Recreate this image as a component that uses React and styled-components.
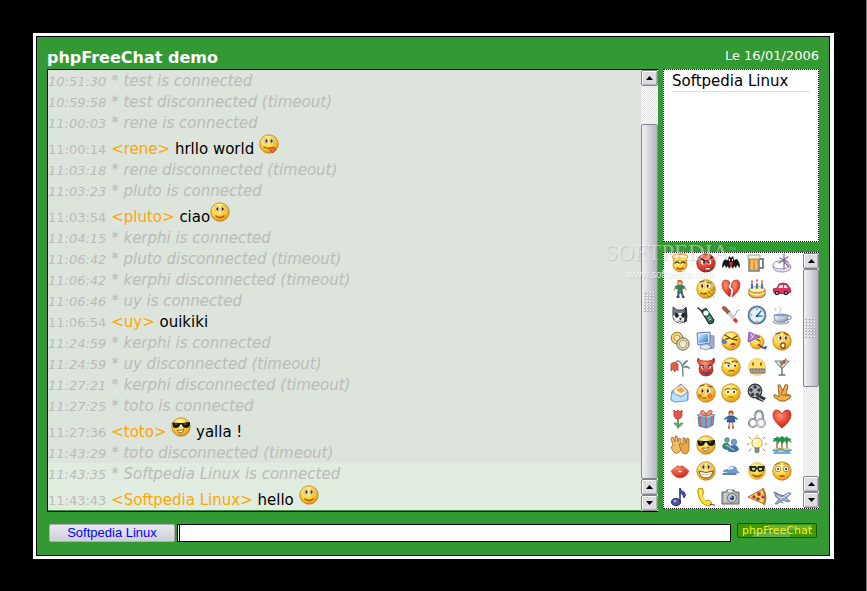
import React, { useState } from "react";
import styled, { createGlobalStyle } from "styled-components";

const GlobalStyle = createGlobalStyle`
  * {
    box-sizing: border-box;
  }

  body {
    margin: 0;
    background-color: #000;
    font-family: "DejaVu Sans", sans-serif;
    font-size: 15px;
  }
`;

const Page = styled.div`
  min-height: 100vh;
  padding: 33px 32px 33px 33px;
  border-right: 1px solid #777;
  border-bottom: 1px solid #777;
`;

const Frame = styled.div`
  position: relative;
  border: solid #fff;
  border-width: 3px 4px 3px 3px;
`;

const ChatWindow = styled.main`
  padding: 0 10px 12px;
  border: 1px solid #000;
  background-color: #339933;
`;

const Header = styled.header`
  display: flex;
  align-items: center;
  justify-content: space-between;
  height: 32px;
  padding-top: 9px;
  color: #fff;
`;

const Title = styled.h1`
  margin: 0;
  font-size: 16px;
  line-height: 20px;
`;

const DateLabel = styled.p`
  margin: 0;
  font-size: 13px;
  line-height: 16px;
  padding-bottom: 4px;
`;

const Columns = styled.div`
  display: flex;
  gap: 5px;
`;

const ChatPanel = styled.section`
  display: flex;
  flex: 1;
  min-width: 0;
  border: solid #000;
  border-width: 1px 0 1px 1px;
`;

const Messages = styled.ul`
  flex: 1;
  margin: 0;
  padding: 0;
  list-style: none;
`;

const Message = styled.li`
  padding-top: 1px;
  line-height: 20px;
  color: ${(props) => (props.$notice ? "#bbb" : "#000")};
  font-style: ${(props) => (props.$notice ? "italic" : "normal")};
  background-color: ${(props) => (props.$recent ? "#e0ecdf" : "#dde4dc")};

  svg {
    width: 20px;
    height: 20px;
    vertical-align: baseline;
  }
`;

const Time = styled.span`
  color: #bbb;
  font-size: 13px;
  line-height: 16px;
`;

const Nick = styled.span`
  color: #ffa500;
`;

const SideColumn = styled.aside`
  display: flex;
  flex-direction: column;
  gap: 10px;
  width: 156px;
`;

const UserList = styled.ul`
  height: 173px;
  margin: 0;
  padding: 0 8px;
  border: 1px dotted #000;
  background-color: #fff;
  list-style: none;
`;

const User = styled.li`
  padding-top: 1px;
  border-bottom: 1px solid #ddd;
  line-height: 20px;
`;

const SmileyPanel = styled.section`
  display: flex;
  height: 257px;
  border: 1px dotted #000;
  border-right: 0;
  background-color: #fff;
`;

const SmileyGrid = styled.div`
  display: grid;
  flex: 1;
  grid-template-columns: repeat(5, 20px);
  grid-auto-rows: 20px;
  row-gap: 6px;
  justify-content: space-between;
  padding: 0 11px 0 6px;
`;

const SmileyButton = styled.button`
  width: 20px;
  height: 20px;
  padding: 0;
  border: 0;
  background: none;
  cursor: pointer;

  svg {
    display: block;
    width: 20px;
    height: 20px;
  }
`;

const Bar = styled.div`
  display: flex;
  flex-direction: column;
  width: ${(props) => props.$width};
  background: repeating-conic-gradient(#e4e4e4 0 25%, #fafafa 0 50%) 0 0 / 2px
    2px;
`;

const ArrowButton = styled.button`
  display: flex;
  align-items: center;
  justify-content: center;
  height: 16px;
  padding: 0;
  border: 1px solid #85858d;
  border-radius: 2px;
  background-color: #dcdce2;
  box-shadow: inset 1px 1px #fff, inset -1px -1px #b4b4bc;
`;

const Thumb = styled.div`
  display: flex;
  align-items: center;
  justify-content: center;
  height: ${(props) => props.$size};
  margin-top: ${(props) => props.$top};
  border: 1px solid #85858d;
  border-radius: 2px;
  background: linear-gradient(90deg, #f0f0f4, #d4d4dc 50%, #b4b4c0);
`;

const Spacer = styled.div`
  flex: 1;
`;

const Form = styled.form`
  display: flex;
  align-items: center;
  margin-top: 11px;
  padding: 0 2px;
`;

const NickButton = styled.button`
  width: 126px;
  height: 18px;
  margin-right: 2px;
  padding: 0;
  border: 1px solid #b0b0b4;
  border-radius: 2px;
  background: linear-gradient(#e8e8ee, #cfcfd8);
  color: #0000ff;
  font-family: "Liberation Sans", sans-serif;
  font-size: 13px;
  line-height: 16px;
`;

const TextInput = styled.input`
  flex: 1;
  min-width: 0;
  height: 18px;
  padding: 0 4px;
  border: 1px solid #000;
  background-color: #fff;
  box-shadow: inset 1px 0 #fff, inset 2px 0 #000;
  font-family: "DejaVu Sans", sans-serif;
  font-size: 12px;
  outline: none;
`;

const LogoLink = styled.a`
  width: 80px;
  height: 15px;
  margin: 0 0 5px 6px;
  border: 1px solid #1c5200;
  border-radius: 2px;
  background: linear-gradient(#68ae42, #68ae42) 30px 1px / 44px 5px no-repeat,
    linear-gradient(#68ae42, #68ae42) 15px 8px / 37px 5px no-repeat, #429a00;
  color: #eef31c;
  font-size: 11px;
  line-height: 13px;
  text-align: center;
  text-decoration: none;
`;

const Watermark = styled.div`
  position: absolute;
  top: 204px;
  right: 91px;
  width: 134px;
  color: rgba(255, 255, 255, 0.45);
  text-shadow: 1px 1px 1px rgba(90, 110, 90, 0.25);
  white-space: nowrap;
  pointer-events: none;
`;

const WatermarkName = styled.div`
  font-family: "Liberation Serif", serif;
  font-size: 23px;
  line-height: 26px;

  sup {
    font-size: 7px;
    line-height: 7px;
    vertical-align: 8px;
  }
`;

const WatermarkUrl = styled.div`
  padding: 2px 0 0 22px;
  color: rgba(255, 255, 255, 0.75);
  font-family: "Liberation Sans", sans-serif;
  font-size: 10px;
  line-height: 14px;
`;

const Svg = ({ children }) => (
  <svg viewBox="0 0 20 20" aria-hidden="true">
    {children}
  </svg>
);

const Gradients = () => (
  <svg width="0" height="0" style={{ display: "block" }} aria-hidden="true">
    <defs>
      <radialGradient id="yellow" cx="40%" cy="30%" r="70%">
        <stop offset="0" stopColor="#fffcc0" />
        <stop offset="0.45" stopColor="#fde04c" />
        <stop offset="1" stopColor="#e59a10" />
      </radialGradient>
      <radialGradient id="red" cx="40%" cy="30%" r="70%">
        <stop offset="0" stopColor="#ff9a78" />
        <stop offset="0.5" stopColor="#ee5038" />
        <stop offset="1" stopColor="#bb2418" />
      </radialGradient>
      <linearGradient id="steel" x2="1" y2="1">
        <stop offset="0" stopColor="#fff" />
        <stop offset="1" stopColor="#8a93ab" />
      </linearGradient>
      <linearGradient id="sky" x2="1" y2="1">
        <stop offset="0" stopColor="#c9efff" />
        <stop offset="1" stopColor="#2e78d0" />
      </linearGradient>
    </defs>
  </svg>
);

const Eyes = ({ y = 8, dx = 0 }) => (
  <>
    <ellipse cx="7" cy={y} rx="2" ry="3" fill="#fff" stroke="#b98b30" strokeWidth="0.6" />
    <ellipse cx="13" cy={y} rx="2" ry="3" fill="#fff" stroke="#b98b30" strokeWidth="0.6" />
    <ellipse cx={7.3 + dx} cy={y} rx="1" ry="1.7" fill="#41210a" />
    <ellipse cx={12.7 + dx} cy={y} rx="1" ry="1.7" fill="#41210a" />
  </>
);

const Face = ({ children, fill = "url(#yellow)", stroke = "#b57b18" }) => (
  <Svg>
    <circle cx="10" cy="10" r="9.2" fill={fill} stroke={stroke} strokeWidth="0.8" />
    {children}
  </Svg>
);

const line = (d, stroke, strokeWidth = 1.2) => (
  <path d={d} fill="none" stroke={stroke} strokeWidth={strokeWidth} strokeLinecap="round" />
);

const Shades = () => (
  <>
    <path d="M1 5.5l8 .5h2l8-1v3q-1 3-4 3t-4-3l-1-1-1 1q-1 3-4 3T2 9z" fill="#15151b" />
    {line("M4 7l2 0M13 7l2 0", "#8493a5", 0.8)}
  </>
);

const smileys = {
  angel: (
    <Svg>
      <path d="M4 5h12l1 7q-1 6-7 7-6-1-7-7z" fill="url(#yellow)" stroke="#c58f2a" strokeWidth="0.8" />
      <ellipse cx="10" cy="3.8" rx="7.5" ry="2.8" fill="#fff4cf" stroke="#f0a040" strokeWidth="1.3" />
      <path d="M4 7q2-3 6-3t6 3l-2 1H6z" fill="#f8d24c" />
      {line("M5 10q2-2 4 0M11 10q2-2 4 0", "#604020", 1.5)}
      {line("M7 15q3 2 6 0", "#a42b12")}
    </Svg>
  ),
  angry: (
    <Face fill="url(#red)" stroke="#8b241c">
      <ellipse cx="7" cy="9" rx="2.2" ry="2.6" fill="#fff" />
      <ellipse cx="13" cy="9" rx="2.2" ry="2.6" fill="#fff" />
      <circle cx="8" cy="9.5" r="1.2" fill="#202068" />
      <circle cx="12.5" cy="9.5" r="1.2" fill="#202068" />
      {line("M4 5l5 3M16 4l-5 4", "#541010", 1.6)}
      <path d="M8 16q3-3 7-1l-1 2H9z" fill="#fff" stroke="#701818" strokeWidth="0.8" />
    </Face>
  ),
  bat: (
    <Svg>
      <path d="M7 7l1-4 2 2 2-2 1 4 3-1q3 3 3 9l-3-3-1 3-2-2-1 3-2-3-2 3-1-3-2 2-1-3-3 3q0-6 3-9z" fill="#15161c" />
      <path d="M8 6h1v2H8zM11 6h1v2h-1z" fill="#fff" />
      <path d="M8 9h4l-1 4H9z" fill="#e02518" />
      <path d="M9 14l1 2 1-2z" fill="#d8cf30" />
    </Svg>
  ),
  beer: (
    <Svg>
      <path d="M12 6h4v9h-4" fill="none" stroke="#78859b" strokeWidth="2" />
      <path d="M2 3h10v15H2z" fill="#f3a53b" stroke="#73809a" strokeWidth="1.5" />
      <path d="M1 2h12v4H1z" fill="#f5ede0" stroke="#99886e" strokeWidth="0.8" />
      {line("M5 8v8M9 8v8", "#ffdc91", 1)}
      {line("M7 10v6", "#e07a1c", 1)}
    </Svg>
  ),
  plate: (
    <Svg>
      <ellipse cx="10" cy="14" rx="9" ry="5" fill="#e8e7f0" stroke="#9690ae" />
      <ellipse cx="9" cy="12" rx="8" ry="4" fill="#fff" stroke="#9690ae" />
      {line("M12 1v15M8 5l8 4M16 4L7 10M12 9l5 5", "#8065a0", 1.2)}
    </Svg>
  ),
  boy: (
    <Svg>
      {line("M9 11l-1 7M11 11l2 7", "#505d98", 2.2)}
      <path d="M5 8l3-2h4l3 2-1 2-2-1v5H8V9l-2 1z" fill="#36865a" stroke="#245848" strokeWidth="0.7" />
      <circle cx="10" cy="4" r="2.4" fill="#edbc80" stroke="#a05c18" strokeWidth="0.7" />
      {line("M5 9l-1 2M15 9l1 2", "#dca35e", 1.5)}
      {line("M7 18h2M13 18h1", "#30394a", 1.5)}
      {line("M8 2q2-1 4 1", "#cf631b", 1.6)}
    </Svg>
  ),
  wave: (
    <Face>
      <Eyes y={7} dx={-1} />
      {line("M4 3l4-1M11 3l4 1", "#80500c")}
      {line("M5 14q3 2 5 0", "#983719")}
      {line("M12 12l6 6M14 9l5 5M17 8l2 3M11 16l3 3M11 15l7-6M14 18l5-5", "#a97820", 0.8)}
    </Face>
  ),
  brokenHeart: (
    <Svg>
      <path d="M9 18Q1 12 1 6q0-5 4-5 3 0 4 3L7 8l3 3z" fill="url(#red)" stroke="#ad3d32" strokeWidth="0.7" />
      <path d="M11 18Q19 12 19 6q0-5-4-5-3 0-4 3l-1 4 3 3z" fill="url(#red)" stroke="#ad3d32" strokeWidth="0.7" />
    </Svg>
  ),
  cake: (
    <Svg>
      <path d="M2 10h16v6q-2 3-8 3t-8-3z" fill="#eab447" stroke="#997323" />
      <ellipse cx="10" cy="10.5" rx="8" ry="3" fill="#fff4b4" stroke="#b69239" strokeWidth="0.8" />
      {line("M5 5v4M10 5v4M15 5v4", "#3569b8", 1.8)}
      {line("M5 2v1M10 1v1M15 2v1", "#f14a20", 1.7)}
      {line("M3 14q3 2 7 2t7-2", "#fff0a3", 1.3)}
    </Svg>
  ),
  car: (
    <Svg>
      <path d="M1 10l4-1 2-4q5-2 8 0l3 4 1 4-4 2-13-1z" fill="#df315b" stroke="#852144" strokeWidth="0.8" />
      <path d="M6 9l2-3h3v3zM12 9V6h2l2 3z" fill="#d2e8f4" />
      <circle cx="5" cy="14" r="2.3" fill="#202336" />
      <circle cx="14" cy="14" r="2.3" fill="#202336" />
      <circle cx="5" cy="14" r="1" fill="#b9bfd2" />
      <circle cx="14" cy="14" r="1" fill="#b9bfd2" />
    </Svg>
  ),
  cat: (
    <Svg>
      <path d="M3 2l4 3h6l3-3 1 9q0 6-7 7-7-1-7-7z" fill="#777e88" stroke="#42454f" />
      <path d="M3 11l4-3h5l4 3-2 5-4 2-5-2z" fill="#f2f4f5" />
      <path d="M5 8q3-1 4 3l-2 2q-3-1-2-5zM11 11q1-4 4-3 1 4-2 5z" fill="#22252d" />
      <path d="M9 13h3l-1 2h-1zM15 3l2 1v12l-3 2z" fill="#32353d" />
      {line("M8 16q2 1 4 0", "#777", 1)}
    </Svg>
  ),
  phone: (
    <Svg>
      {line("M2 3l5 4", "#20342f", 1.6)}
      <path d="M5 6l5-3 8 12-1 3-4 1z" fill="#2e6355" stroke="#182c2a" />
      <circle cx="10" cy="8" r="2.6" fill="#effff5" />
      {line("M12 13l2-1M13 15l2-1", "#c2dbca")}
    </Svg>
  ),
  cigarette: (
    <Svg>
      {line("M3 3l5 5", "#996045", 4)}
      {line("M9 9l5 6", "#cbd0dc", 4)}
      {line("M14 15l1 1", "#e6321c", 3.4)}
      {line("M18 5q-4 1-3 4l-2 2", "#8ea2c4", 1)}
    </Svg>
  ),
  clock: (
    <Svg>
      <circle cx="10" cy="10" r="8.4" fill="#e6f4fc" stroke="#597b98" strokeWidth="2" />
      <circle cx="10" cy="10" r="7" fill="none" stroke="#b4d1e2" />
      {line("M10 11l4-5M10 11h5", "#2e78b8", 1.6)}
      <circle cx="10" cy="11" r="1.2" fill="#234e8f" />
      {line("M10 4v1M10 16v1M4 10h1", "#d65838", 1)}
    </Svg>
  ),
  coffee: (
    <Svg>
      {line("M4 6q-3-2 0-3M7 8q4-3 0-6", "#b1b5bd", 0.9)}
      <ellipse cx="9" cy="17" rx="8" ry="2" fill="#d8e1ee" stroke="#7987ad" strokeWidth="0.8" />
      <path d="M2 10h14q0 6-4 7H6q-4-1-4-7z" fill="url(#steel)" stroke="#6373a0" strokeWidth="0.8" />
      {line("M16 11q4-1 3 2t-4 1", "#6373a0", 1)}
      <ellipse cx="9" cy="10" rx="6.5" ry="1.5" fill="#7f9ec5" />
    </Svg>
  ),
  coins: (
    <Svg>
      <circle cx="7" cy="7" r="5.8" fill="#f4d279" stroke="#9a7630" />
      <circle cx="7" cy="7" r="3" fill="#fbe9b0" stroke="#c69946" />
      <circle cx="13" cy="13" r="6.2" fill="#d7d2ab" stroke="#776c47" />
      <circle cx="13" cy="13" r="3.7" fill="#eee9ca" stroke="#a1976e" strokeWidth="0.8" />
    </Svg>
  ),
  computer: (
    <Svg>
      <path d="M12 4l6 1v12l-5 1z" fill="#9faed4" stroke="#6072a2" strokeWidth="0.7" />
      <path d="M1 2l13-1v11L2 14z" fill="#d6e2f7" stroke="#657bb3" />
      <path d="M3 4l9-1v8l-9 1z" fill="url(#sky)" />
      <path d="M5 14l6-1 5 3-6 3-6-2z" fill="#dce4f4" stroke="#7985ab" strokeWidth="0.8" />
    </Svg>
  ),
  cry: (
    <Face>
      {line("M4 4l5 3-4 1M16 5l-5 3 5 1", "#743e11", 1.3)}
      <path d="M1 8q5 0 5 4-3 2-5 0z" fill="#6575cc" />
      <ellipse cx="12" cy="14" rx="2.6" ry="2" fill="#a72724" />
      {line("M10 15q2-1 4 0", "#fff", 1)}
    </Face>
  ),
  party: (
    <Svg>
      <circle cx="10" cy="11" r="7" fill="url(#yellow)" stroke="#bd8420" strokeWidth="0.8" />
      <path d="M1 11L2 1l11 5z" fill="#ad7bcb" stroke="#744598" strokeWidth="0.8" />
      {line("M4 3l2 4M7 4l-3 4", "#e9d3f6", 1)}
      {line("M10 9q1-1 3 1", "#70420d")}
      {line("M12 14l4 3 3-1-1 2", "#2f38a6", 1.4)}
      <circle cx="12" cy="14" r="1.3" fill="#d82f28" />
    </Svg>
  ),
  shocked: (
    <Face>
      <Eyes y={7} dx={1} />
      {line("M4 3l4-1M12 2l4 2", "#7b4b0d")}
      <ellipse cx="11" cy="14.5" rx="2.2" ry="2.6" fill="#fff" stroke="#823617" strokeWidth="1.2" />
    </Face>
  ),
  deadRose: (
    <Svg>
      {line("M5 8q1-6 5-3 3 2 3 14", "#65877c", 1.4)}
      {line("M13 8q2-3 4-4M14 10q3-1 5 1", "#5c8077", 1.7)}
      <path d="M1 7l3-2 4 2v7l-2-2-1 3-2-3-2 2z" fill="#e65b3e" stroke="#ae3625" strokeWidth="0.7" />
    </Svg>
  ),
  devil: (
    <Svg>
      <path d="M4 8Q0 5 2 1q2 3 5 3h6q3 0 5-3 2 4-2 7 2 5 0 8-2 3-6 3t-6-3q-2-4 0-8z" fill="url(#red)" stroke="#9c2920" strokeWidth="0.8" />
      <ellipse cx="7" cy="10" rx="2" ry="1.8" fill="#d7f1ff" />
      <ellipse cx="13" cy="10" rx="2" ry="1.8" fill="#d7f1ff" />
      <circle cx="7.5" cy="10.4" r="1.1" fill="#2850a0" />
      <circle cx="12.5" cy="10.4" r="1.1" fill="#2850a0" />
      {line("M5 8l3 1M15 8l-3 1", "#671815")}
      {line("M7 15q3 2 6 0", "#2850a0", 1.4)}
    </Svg>
  ),
  doubt: (
    <Face>
      <ellipse cx="6.5" cy="8.5" rx="2.3" ry="1.8" fill="#fff" />
      <ellipse cx="13" cy="8.5" rx="2.3" ry="1.8" fill="#fff" />
      <circle cx="7.5" cy="8.8" r="1" fill="#302010" />
      <circle cx="14" cy="8.8" r="1" fill="#302010" />
      {line("M4 6q2-1 5 1M11 5q3-2 5 0M8 14q3-1 5 0", "#7d470c")}
    </Face>
  ),
  teeth: (
    <Svg>
      <circle cx="10" cy="10" r="8.4" fill="#ffe268" stroke="#eec879" />
      {line("M6 6v2M14 6v2", "#875b11", 1.7)}
      <path d="M3 12h15v4H4z" fill="#b2aaa0" stroke="#787168" />
      {line("M6 12v3M9 12v3M12 12v3M15 12v3", "#6f665c", 0.7)}
    </Svg>
  ),
  martini: (
    <Svg>
      <path d="M3 4h14l-6 7H9z" fill="#c5ede8" stroke="#61767f" strokeWidth="0.9" />
      {line("M10 11v7M7 18h6", "#65777e", 1.5)}
      {line("M9 9l5-7", "#e7582e", 1.5)}
      <circle cx="12" cy="5" r="1.8" fill="#c24d28" />
      <circle cx="9" cy="6" r="1.4" fill="#5d9a57" />
    </Svg>
  ),
  mail: (
    <Svg>
      <path d="M2 8l9-7 7 7v9l-13 2-4-2z" fill="#8ebfea" stroke="#5088bd" strokeWidth="0.8" />
      <path d="M4 6l8-4 5 7-5 4-8-2z" fill="#fff4d7" stroke="#dfa35e" strokeWidth="0.7" />
      <path d="M6 7l5-3 4 4-4 2z" fill="#f3a14d" />
      <path d="M2 9l9 5 7-5-1 9-12 1-4-2z" fill="#b9e0fb" stroke="#5a91c6" strokeWidth="0.7" />
    </Svg>
  ),
  blush: (
    <Face>
      <Eyes y={8} dx={-0.8} />
      <circle cx="4" cy="13" r="2.2" fill="#f4762b" />
      <circle cx="14" cy="13" r="2.6" fill="#f4762b" />
      {line("M4 3l4-1M12 3l4 1M7 15h3", "#83400d")}
    </Face>
  ),
  sad: (
    <Face>
      <ellipse cx="6.7" cy="9" rx="2.2" ry="2" fill="#fff" />
      <ellipse cx="13.3" cy="9" rx="2.2" ry="2" fill="#fff" />
      <circle cx="7" cy="9" r="1" fill="#302010" />
      <circle cx="13" cy="9" r="1" fill="#302010" />
      {line("M4 7q2-2 5-1M11 6q3-1 5 1M8 14h4", "#9b6013")}
    </Face>
  ),
  film: (
    <Svg>
      <path d="M11 11l8 4-3 4-7-3z" fill="#30343a" />
      <circle cx="8" cy="8" r="6.8" fill="#a9adb0" stroke="#2d3137" strokeWidth="1.2" />
      <circle cx="8" cy="4" r="1.8" fill="#353a43" />
      <circle cx="4" cy="7" r="1.8" fill="#353a43" />
      <circle cx="12" cy="7" r="1.8" fill="#353a43" />
      <circle cx="5.5" cy="11.5" r="1.8" fill="#353a43" />
      <circle cx="10.5" cy="11.5" r="1.8" fill="#353a43" />
      {line("M12 15l5 3", "#d9dbde", 1)}
    </Svg>
  ),
  fingers: (
    <Svg>
      <path d="M7 11L6 3q0-2 2-1l3 6 2-6q2-2 3 1l-2 8 4 1q2 1 0 3l-5 3H8l-6-4q-1-3 2-2l3 2z" fill="#edad48" stroke="#996323" />
      {line("M10 8l-1 4 5 0M13 12l4 1", "#9a6123", 0.8)}
    </Svg>
  ),
  rose: (
    <Svg>
      {line("M8 9v10", "#388b47", 1.6)}
      <path d="M8 16q-1-3-4-2 1 3 4 3zM8 17q2-4 5-3-2 4-5 4z" fill="#7cba83" stroke="#418852" strokeWidth="0.7" />
      <path d="M4 1l2 2 2-2 2 2 2-2v6q-1 3-4 3T4 7z" fill="#e95346" stroke="#b43831" strokeWidth="0.8" />
    </Svg>
  ),
  gift: (
    <Svg>
      <path d="M2 8l16-1-1 9-6 3-8-2z" fill="#65ace0" stroke="#39678f" strokeWidth="0.8" />
      <path d="M1 6l8-2 10 2-8 4z" fill="#9bd0ef" stroke="#4b82ac" strokeWidth="0.7" />
      {line("M10 8v10M4 8l1 9M16 8l-1 8", "#df5b42", 1.6)}
      <path d="M10 7Q3 6 5 2q3-2 5 4 2-6 6-4 1 4-6 5z" fill="#f2987c" stroke="#d0503c" />
    </Svg>
  ),
  girl: (
    <Svg>
      {line("M9 12l-1 6M11 12l1 6", "#ca9172", 1.6)}
      <path d="M7 7h6l1 6H6z" fill="#3864ac" stroke="#243b6c" strokeWidth="0.6" />
      {line("M7 8l-3 2M13 8l3 2", "#336caf", 1.6)}
      <circle cx="10" cy="4" r="2.6" fill="#9b4e32" />
      <circle cx="10" cy="5" r="1.6" fill="#efc296" />
      {line("M8 18v1M12 18v1", "#d06a2b", 2)}
    </Svg>
  ),
  handcuffs: (
    <Svg>
      <circle cx="6" cy="14" r="4" fill="none" stroke="#737a80" strokeWidth="2.2" />
      <circle cx="14" cy="14" r="4" fill="none" stroke="#8b9299" strokeWidth="2.2" />
      <circle cx="6" cy="14" r="4" fill="none" stroke="#ccd0d3" strokeWidth="0.8" />
      <circle cx="14" cy="14" r="4" fill="none" stroke="#e1e4e6" strokeWidth="0.8" />
      {line("M8 9q0-7 4-7t4 7", "#8c9298", 2.4)}
      {line("M8 8q1-5 4-5t3 5", "#d4d8da", 0.8)}
    </Svg>
  ),
  heart: (
    <Svg>
      <path d="M10 19Q1 12 1 6q0-5 4-5 3 0 5 4 2-4 5-4 4 0 4 5 0 6-9 13z" fill="url(#red)" stroke="#ad3026" strokeWidth="0.8" />
    </Svg>
  ),
  highFive: (
    <Svg>
      <path d="M3 11L1 3l2-1 2 5V1h2l1 6 1-4 2 1v9q-1 6-6 5-3-2-4-6z" fill="#f3bd68" stroke="#9d6728" strokeWidth="0.8" />
      <path d="M10 12l-1-3 2-1 2 2V3h2l1 5 1-5 2 1v9q0 6-4 6-4-1-5-7z" fill="#eda342" stroke="#9d6728" strokeWidth="0.8" />
    </Svg>
  ),
  cool: (
    <Face>
      <Shades />
      <path d="M6 13q5 1 7-1-1 4-3 4-3 0-4-3z" fill="#fff" stroke="#87401d" strokeWidth="0.8" />
    </Face>
  ),
  messenger: (
    <Svg>
      <circle cx="6" cy="5" r="2.8" fill="#5fa198" />
      <path d="M1 11q2-4 6-3l4 5-4 2q-5 0-6-4z" fill="#387f7a" />
      <circle cx="13" cy="7" r="3.2" fill="#719bcc" />
      <path d="M7 16q0-6 6-6 4 0 5 5-5 4-11 1z" fill="#3e6fa8" />
      {line("M5 10l8 5", "#9dc9b5", 1.4)}
    </Svg>
  ),
  bulb: (
    <Svg>
      <circle cx="10" cy="8" r="5.2" fill="#fff5a6" stroke="#d0aa48" />
      <path d="M8 13h4v4q-2 2-4 0z" fill="#85909b" stroke="#61686f" strokeWidth="0.7" />
      {line("M10 0v1M2 2l2 2M18 2l-2 2M0 9h2M18 9h2M2 16l2-2M18 16l-2-2", "#a18d51", 1)}
      <circle cx="8" cy="6" r="1.8" fill="#fff" />
    </Svg>
  ),
  island: (
    <Svg>
      {line("M5 6v8M10 6v8M15 6v8", "#9b6a33", 1.4)}
      <path d="M1 7l1-3-1-1 3 0 1-2 2 2 3-2 3 2 2-2 1 2 4 1-2 1 2 3-4-2-2 3-1-3-3 3-2-3-2 3-1-3z" fill="#23934e" />
      <path d="M1 14q9-3 18 0l-1 3H2z" fill="#dfc47c" />
      {line("M1 15q3 2 5 0t5 0 8 0M2 18h16", "#3c9cca", 1.5)}
    </Svg>
  ),
  lips: (
    <Svg>
      <path d="M1 10l6-5q2-1 3 1 1-2 3-1l6 5q-3 7-9 7t-9-7z" fill="url(#red)" stroke="#d36655" strokeWidth="0.7" />
      <path d="M6 10l4-1 4 1-4 2z" fill="#fff0e8" stroke="#a82c25" strokeWidth="0.7" />
    </Svg>
  ),
  laugh: (
    <Face>
      <Eyes y={6} />
      <path d="M3 10q7 3 14 0-1 7-7 7T3 10z" fill="#fff" stroke="#8b541a" />
      {line("M5 13q5 2 10 0", "#b9b1a5", 0.8)}
    </Face>
  ),
  cloud: (
    <Svg>
      <path d="M2 11q0-3 5-3 2-4 6-3 3 1 3 4l3 3q-8 1-17-1z" fill="#6f9acb" />
      <path d="M7 7q3-3 6-1l-1 2-5 1z" fill="#d8e7f4" />
      {line("M2 13h13", "#315c98", 1.4)}
    </Svg>
  ),
  nerd: (
    <Svg>
      <circle cx="10" cy="10" r="8.5" fill="url(#yellow)" stroke="#f3cc5c" />
      <path d="M2 5h7l1 2 1-2h7l-1 5-5 1-2-3-2 3-5-1z" fill="#242b27" />
      <path d="M5 7h3v2H5zM12 7h3v2h-3z" fill="#c7d99b" />
      {line("M6 14q4 3 8 0", "#90551b", 1.4)}
    </Svg>
  ),
  stare: (
    <Face>
      <circle cx="6" cy="8" r="2.8" fill="#fff" stroke="#a2742e" strokeWidth="0.8" />
      <circle cx="14" cy="8" r="2.8" fill="#fff" stroke="#a2742e" strokeWidth="0.8" />
      <circle cx="6" cy="8" r="1.1" fill="#292932" />
      <circle cx="14" cy="8" r="1.1" fill="#292932" />
      {line("M3 4q3-2 5-1M12 3q3-1 5 1", "#b27920")}
      {line("M8 15h4", "#c83d25", 1.5)}
    </Face>
  ),
  note: (
    <Svg>
      <ellipse cx="6" cy="15" rx="4.5" ry="3.5" fill="#4d569f" stroke="#2c326e" />
      {line("M10 15V2", "#343a80", 1.6)}
      <path d="M10 1q1 4 4 4 3 3 0 6 0-4-4-5z" fill="#4b569f" stroke="#343a80" />
      <circle cx="5" cy="14" r="1.3" fill="#a8aee1" />
    </Svg>
  ),
  telephone: (
    <Svg>
      <path d="M2 2l4-1 2 5-2 2q1 4 4 6l3-1 3 3-2 3Q4 19 2 6z" fill="#ffe029" stroke="#b79016" />
      {line("M14 17l1 1 1-1 1 1 2 0", "#4d4b40", 1)}
      {line("M4 4l1 4 4 6", "#fff7a0", 1)}
    </Svg>
  ),
  camera: (
    <Svg>
      <path d="M1 5h4l1-2h7l1 2h4v12H1z" fill="#aeb0af" stroke="#63696b" />
      <path d="M7 3h4v2H7z" fill="#eceeed" />
      <circle cx="11" cy="11" r="4.3" fill="#e3e6e6" stroke="#555e63" strokeWidth="0.8" />
      <circle cx="11" cy="11" r="2.4" fill="#304d71" />
      <circle cx="10" cy="10" r="1" fill="#83c6e9" />
      {line("M4 7h2M4 7v8", "#e8e9e7", 1)}
    </Svg>
  ),
  pizza: (
    <Svg>
      <path d="M1 10L16 2q3 6 1 15z" fill="#f6cf72" stroke="#a96b27" />
      {line("M16 2q4 7 1 15", "#b17939", 2.2)}
      <circle cx="7" cy="10" r="1.7" fill="#b8342a" />
      <circle cx="12" cy="7" r="1.9" fill="#b8342a" />
      <circle cx="11" cy="12" r="1.8" fill="#b8342a" />
      <circle cx="16" cy="10" r="1.6" fill="#b8342a" />
    </Svg>
  ),
  plane: (
    <Svg>
      <path d="M2 5l3 1 2 3h4l5-3q3-1 3 1l-5 4 4 3-2 1-5-2-6 4H3l4-5-3-2z" fill="#9daece" stroke="#57698f" strokeWidth="0.8" />
      {line("M6 9l3 2 8-4", "#e9f0fb", 1)}
      {line("M9 15l2 1M5 7l7 2", "#53698e", 1)}
    </Svg>
  ),
};

const tongue = (
  <Face>
    <Eyes y={7} />
    {line("M5 13q3 2 9 1", "#9c571c")}
    <path d="M10 14l5-1 2 3-3 3q-3-1-4-5z" fill="#ed693e" stroke="#b9412a" strokeWidth="0.7" />
  </Face>
);

const smile = (
  <Face>
    <Eyes y={7} />
    {line("M6 14q4 3 8 0", "#b14b24", 1.4)}
  </Face>
);

const messages = [
  { time: "10:51:30", notice: "test is connected" },
  { time: "10:59:58", notice: "test disconnected (timeout)" },
  { time: "11:00:03", notice: "rene is connected" },
  { time: "11:00:14", nick: "rene", text: <>hrllo world {tongue}</> },
  { time: "11:03:18", notice: "rene disconnected (timeout)" },
  { time: "11:03:23", notice: "pluto is connected" },
  { time: "11:03:54", nick: "pluto", text: <>ciao{smile}</> },
  { time: "11:04:15", notice: "kerphi is connected" },
  { time: "11:06:42", notice: "pluto disconnected (timeout)" },
  { time: "11:06:42", notice: "kerphi disconnected (timeout)" },
  { time: "11:06:46", notice: "uy is connected" },
  { time: "11:06:54", nick: "uy", text: "ouikiki" },
  { time: "11:24:59", notice: "kerphi is connected" },
  { time: "11:24:59", notice: "uy disconnected (timeout)" },
  { time: "11:27:21", notice: "kerphi disconnected (timeout)" },
  { time: "11:27:25", notice: "toto is connected" },
  { time: "11:27:36", nick: "toto", text: <>{smileys.cool} yalla !</> },
  { time: "11:43:29", notice: "toto disconnected (timeout)" },
  { time: "11:43:35", notice: "Softpedia Linux is connected", recent: true },
  {
    time: "11:43:43",
    nick: "Softpedia Linux",
    text: <>hello {smile}</>,
    recent: true,
  },
];

const Arrow = ({ down }) => (
  <svg width="7" height="4" viewBox="0 0 7 4" aria-hidden="true">
    <path d={down ? "M0 0h7L3.5 4z" : "M0 4h7L3.5 0z"} fill="#000" />
  </svg>
);

const Grip = () => (
  <svg width="12" height="20" viewBox="0 0 12 20" aria-hidden="true">
    {[0, 3, 6, 9].map((x) =>
      [0, 3, 6, 9, 12, 15, 18].map((y) => (
        <g key={`${x}-${y}`}>
          <rect x={x} y={y} width="2" height="2" fill="#b4b4be" />
          <rect x={x} y={y} width="1" height="1" fill="#fff" />
        </g>
      ))
    )}
  </svg>
);

const ScrollBar = ({ width, top, size }) => (
  <Bar $width={width}>
    <ArrowButton type="button" aria-label="Scroll up">
      <Arrow />
    </ArrowButton>
    <Thumb $top={top} $size={size}>
      <Grip />
    </Thumb>
    <Spacer />
    <ArrowButton type="button" aria-label="Scroll up">
      <Arrow />
    </ArrowButton>
    <ArrowButton type="button" aria-label="Scroll down">
      <Arrow down />
    </ArrowButton>
  </Bar>
);

const App = () => {
  const [words, setWords] = useState("");

  const handleSubmit = (e) => {
    e.preventDefault();
    setWords("");
  };

  return (
    <Page>
      <GlobalStyle />
      <Gradients />
      <Frame>
        <ChatWindow>
          <Header>
            <Title>phpFreeChat demo</Title>
            <DateLabel>Le 16/01/2006</DateLabel>
          </Header>

          <Columns>
            <ChatPanel>
              <Messages>
                {messages.map((message, index) => (
                  <Message
                    key={index}
                    $notice={Boolean(message.notice)}
                    $recent={message.recent}
                  >
                    <Time>{message.time}</Time>{" "}
                    {message.notice ? (
                      <>* {message.notice}</>
                    ) : (
                      <>
                        <Nick>&lt;{message.nick}&gt;</Nick> {message.text}
                      </>
                    )}
                  </Message>
                ))}
              </Messages>
              <ScrollBar width="17px" top="38px" size="355px" />
            </ChatPanel>

            <SideColumn>
              <UserList>
                <User>Softpedia Linux</User>
              </UserList>
              <SmileyPanel>
                <SmileyGrid>
                  {Object.entries(smileys).map(([name, icon]) => (
                    <SmileyButton key={name} type="button" aria-label={name}>
                      {icon}
                    </SmileyButton>
                  ))}
                </SmileyGrid>
                <ScrollBar width="16px" top="0" size="118px" />
              </SmileyPanel>
            </SideColumn>
          </Columns>

          <Form onSubmit={handleSubmit}>
            <NickButton type="button">Softpedia Linux</NickButton>
            <TextInput
              type="text"
              aria-label="Message"
              value={words}
              onChange={(e) => setWords(e.target.value)}
            />
            <LogoLink href="#">phpFreeChat</LogoLink>
          </Form>
        </ChatWindow>
        <Watermark>
          <WatermarkName>
            SOFTPEDIA<sup>™</sup>
          </WatermarkName>
          <WatermarkUrl>www.softpedia.com</WatermarkUrl>
        </Watermark>
      </Frame>
    </Page>
  );
};

export default App;
